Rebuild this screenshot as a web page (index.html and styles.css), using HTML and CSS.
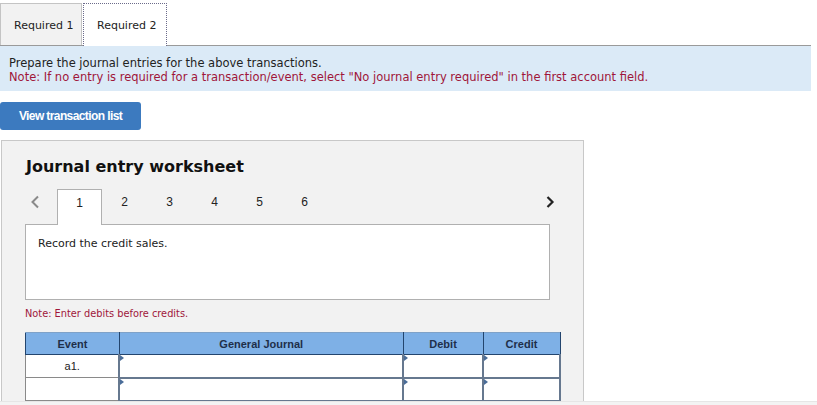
FILE: index.html
```html
<!DOCTYPE html>
<html>
<head>
<meta charset="utf-8">
<link rel="stylesheet" href="styles.css">
</head>
<body>
<div class="page">
  <div class="tabs">
    <div class="tab">Required 1</div>
    <div class="tab tab-active">Required 2</div>
  </div>
  <div class="notice">
    <div>Prepare the journal entries for the above transactions.</div>
    <div class="notice-red">Note: If no entry is required for a transaction/event, select "No journal entry required" in the first account field.</div>
  </div>
  <div class="btn-row">
    <button class="btn">View transaction list</button>
  </div>
  <div class="worksheet">
    <h2 class="ws-title">Journal entry worksheet</h2>
    <div class="nav">
      <span class="arrow arrow-left"><svg width="10" height="14" viewBox="0 0 10 14"><path d="M8 1.5 L2.5 7 L8 12.5" fill="none" stroke="#8a8a8a" stroke-width="2"/></svg></span>
      <div class="steps">
        <div class="step step-active">1</div>
        <div class="step">2</div>
        <div class="step">3</div>
        <div class="step">4</div>
        <div class="step">5</div>
        <div class="step">6</div>
      </div>
      <span class="arrow arrow-right"><svg width="10" height="14" viewBox="0 0 10 14"><path d="M2.5 2 L7.5 7 L2.5 12" fill="none" stroke="#222" stroke-width="2.2"/></svg></span>
    </div>
    <div class="desc">Record the credit sales.</div>
    <div class="note">Note: Enter debits before credits.</div>
    <table class="journal">
      <thead>
        <tr>
          <th class="c-event">Event</th>
          <th class="c-gj">General Journal</th>
          <th class="c-debit">Debit</th>
          <th class="c-credit">Credit</th>
        </tr>
      </thead>
      <tbody>
        <tr>
          <td class="ev">a1.</td>
          <td class="inp"><span class="tri"></span></td>
          <td class="inp"><span class="tri"></span></td>
          <td class="inp"><span class="tri"></span></td>
        </tr>
        <tr>
          <td class="ev"></td>
          <td class="inp"><span class="tri"></span></td>
          <td class="inp"><span class="tri"></span></td>
          <td class="inp"><span class="tri"></span></td>
        </tr>
      </tbody>
    </table>
  </div>
  <div class="foot"></div>
</div>
</body>
</html>
```

FILE: styles.css
```css
html, body {
  margin: 0;
  padding: 0;
  background: #ffffff;
}
body {
  font-family: "DejaVu Sans", Verdana, sans-serif;
  font-size: 11px;
  color: #222;
  height: 405px;
  overflow: hidden;
}
.page {
  width: 817px;
}
.tabs {
  display: flex;
  padding-top: 3px;
  width: 811px;
  border-bottom: 1px solid #9a9a9a;
  height: 42px;
}
.tab {
  width: 82px;
  height: 42px;
  box-sizing: border-box;
  border: 1px solid #c4c4c4;
  border-bottom: none;
  background: #f2f2f2;
  font-size: 11px;
  color: #222;
  padding-left: 13px;
  line-height: 43px;
  margin-right: 1px;
}
.tab-active {
  width: 84px;
  background: #ffffff;
  border: 1px dotted #6a6a8a;
  border-bottom: none;
  height: 43px;
  padding-left: 13px;
}
.notice {
  width: 811px;
  box-sizing: border-box;
  background: #dbeaf7;
  padding: 10px 9px 8px;
  height: 45px;
  font-size: 11.5px;
  line-height: 14px;
  color: #222;
}
.notice-red {
  color: #a0163a;
}
.btn-row {
  padding-top: 11px;
}
.btn {
  display: block;
  width: 141px;
  height: 28px;
  border: none;
  border-radius: 3px;
  background: #3c7abf;
  color: #fff;
  font-family: "Liberation Sans", Arial, sans-serif;
  font-weight: bold;
  font-size: 12px;
  letter-spacing: -0.6px;
  padding: 0;
  margin: 0;
}
.worksheet {
  margin-top: 10px;
  margin-left: 1px;
  width: 583px;
  height: 261px;
  box-sizing: border-box;
  border: 1px solid #c8c8c8;
  border-bottom: none;
  background: #f2f2f2;
  padding: 0 0 0 23px;
}
.ws-title {
  margin: 0;
  padding-top: 15px;
  padding-left: 1px;
  font-size: 16px;
  font-weight: bold;
  color: #111;
  line-height: 22px;
  height: 33px;
  box-sizing: content-box;
}
.nav {
  display: flex;
  align-items: flex-end;
  width: 526px;
  height: 35px;
  position: relative;
}
.arrow {
  position: absolute;
  top: 6px;
}
.arrow-left { left: 5px; }
.arrow-right { left: 520px; }
.steps {
  display: flex;
  margin-left: 32px;
}
.step {
  width: 45px;
  height: 35px;
  box-sizing: border-box;
  text-align: center;
  line-height: 27px;
  font-family: "Liberation Sans", Arial, sans-serif;
  font-size: 12px;
  color: #222;
}
.step-active {
  background: #fff;
  border: 1px solid #b0b0b0;
  border-bottom: none;
  height: 36px;
  margin-bottom: -1px;
  position: relative;
  z-index: 1;
}
.desc {
  width: 525px;
  height: 76px;
  box-sizing: border-box;
  background: #fff;
  border: 1px solid #b0b0b0;
  padding: 12px 0 0 12px;
  font-size: 11px;
  color: #222;
}
.note {
  margin-top: 8px;
  font-size: 9.8px;
  color: #a0163a;
  height: 24px;
  line-height: 12px;
}
.journal {
  border-collapse: collapse;
  width: 536px;
  margin-top: 0;
  font-family: "Liberation Sans", Arial, sans-serif;
}
.journal th {
  background: #7eb0e6;
  color: #1e2f4a;
  font-size: 11px;
  font-weight: bold;
  height: 21px;
  padding: 0;
  border: 1px solid #23456e;
  border-top: 1px solid #7fa2c8;
}
.c-event { width: 93px; }
.c-gj { width: 283px; }
.c-debit { width: 79px; }
.c-credit { width: 76px; }
.journal td {
  height: 21px;
  padding: 0;
  background: #fff;
}
.journal td.ev {
  text-align: center;
  font-size: 11px;
  color: #222;
  border: 1px solid #8a8a8a;
  border-top: none;
  vertical-align: top;
  padding-top: 5px;
  height: 17px;
}
.journal td.inp {
  border-left: 2px solid #66788f;
  border-right: 2px solid #66788f;
  border-bottom: 2px solid #66788f;
  position: relative;
}
.tri {
  position: absolute;
  left: 0;
  top: 0;
  width: 0;
  height: 0;
  border-top: 3px solid transparent;
  border-bottom: 3px solid transparent;
  border-left: 4px solid #4a6d99;
}
.foot {
  height: 5px;
  width: 817px;
  background: #f3f3f3;
  border-top: 1px solid #e6e6e6;
}
```
